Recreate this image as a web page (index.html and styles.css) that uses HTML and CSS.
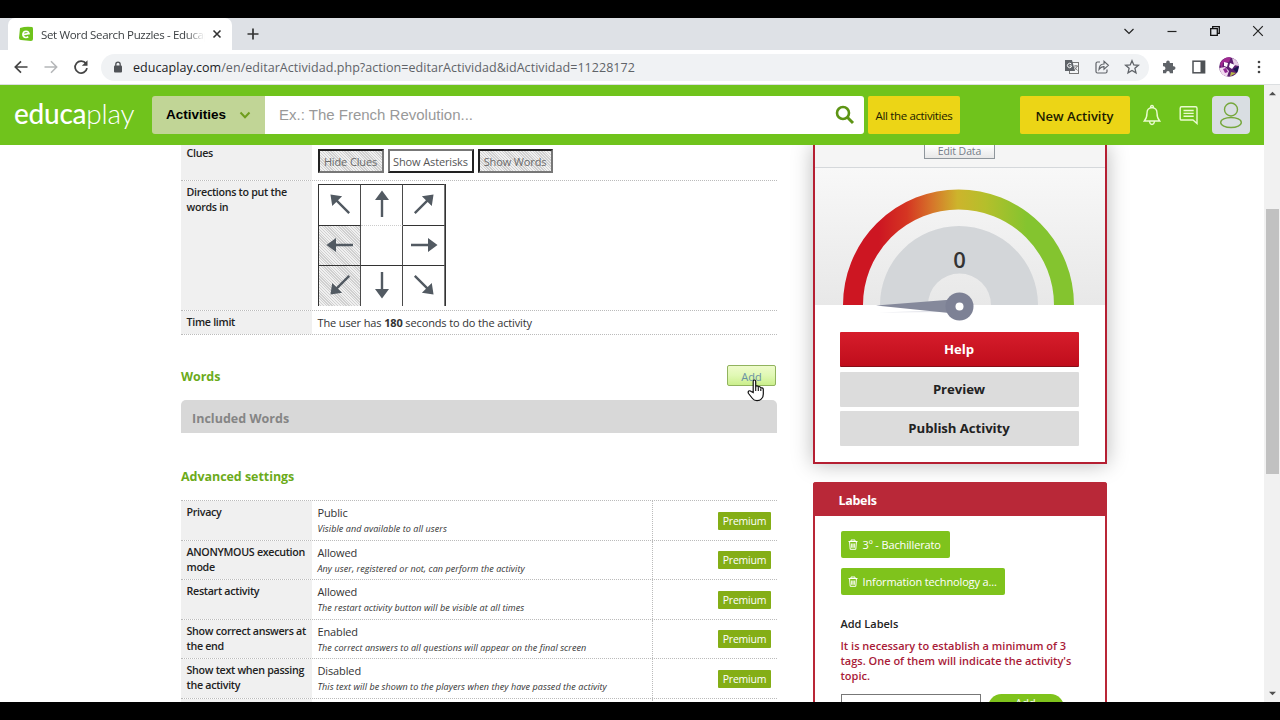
FILE: index.html
```html
<!DOCTYPE html>
<html lang="en">
  <head>
    <meta charset="UTF-8" />
    <meta name="viewport" content="width=device-width, initial-scale=1.0" />
    <title>Set Word Search Puzzles - Educaplay</title>
    <link rel="stylesheet" href="styles.css">
  </head>
  <body>
    <div class="browser">
      <div class="tabs">
        <div class="tab">
          <svg class="favicon" viewBox="0 0 16 16"><path d="M2 2 Q8 0 14 1 Q15 1 15 3 L15 13 Q15 15 13 15 L3 14 Q1 14 1 12 Z" fill="#6fc31c"/><path d="M5 8.6 L11 7.6 A3.1 3.1 0 1 0 10.2 10.6" fill="none" stroke="#fff" stroke-width="1.7"/></svg>
          <span class="tab-title">Set Word Search Puzzles - Educaplay</span>
          <svg class="tab-close" viewBox="0 0 10 10"><path d="M1.5 1.5 L8.5 8.5 M8.5 1.5 L1.5 8.5" stroke="#333" stroke-width="1.6"/></svg>
        </div>
        <svg class="new-tab" viewBox="0 0 12 12"><path d="M6 .5 V11.5 M.5 6 H11.5" stroke="#333" stroke-width="1.7"/></svg>
        <div class="window-buttons">
          <svg viewBox="0 0 12 12"><path d="M1.5 4 L6 8.5 L10.5 4" fill="none" stroke="#222" stroke-width="1.2"/></svg>
          <svg viewBox="0 0 12 12"><path d="M1.5 6.5 H10.5" stroke="#222" stroke-width="1.2"/></svg>
          <svg viewBox="0 0 12 12"><path d="M1.7 3.7 H8.3 V10.3 H1.7 Z M3.7 3.5 V1.7 H10.3 V8.3 H8.5" fill="none" stroke="#111" stroke-width="1.3"/></svg>
          <svg viewBox="0 0 12 12"><path d="M1.2 1.2 L10.8 10.8 M10.8 1.2 L1.2 10.8" stroke="#222" stroke-width="1.2"/></svg>
        </div>
      </div>
      <div class="toolbar">
        <svg class="nav" viewBox="0 0 16 16"><path d="M14.5 8 H2.5 M8 2.3 L2.3 8 L8 13.7" fill="none" stroke="#444" stroke-width="1.7"/></svg>
        <svg class="nav" viewBox="0 0 16 16"><path d="M1.5 8 H13.5 M8 2.3 L13.7 8 L8 13.7" fill="none" stroke="#b4b6b8" stroke-width="1.5"/></svg>
        <svg class="nav" viewBox="0 0 16 16"><path d="M13 4.6 A6 6 0 1 0 14 9.2" fill="none" stroke="#444" stroke-width="1.8"/><path d="M14.5 1.2 V6.8 H8.9 Z" fill="#444"/></svg>
        <div class="address">
          <svg class="lock" viewBox="0 0 10 12"><rect x="1" y="4.6" width="8" height="7" rx="1" fill="#505357"/><path d="M2.8 5 V3.4 A2.2 2.2 0 0 1 7.2 3.4 V5" fill="none" stroke="#505357" stroke-width="1.3"/></svg>
          <span class="url"><b>educaplay.com</b>/en/editarActividad.php?action=editarActividad&amp;idActividad=11228172</span>
          <svg class="tool first" viewBox="0 0 16 16"><rect x="5.5" y="3.5" width="9" height="11" fill="#f4f6f7" stroke="#777" /><path d="M1 1 H8 L11 12 H1 Z" fill="#5f6368"/><path d="M7.3 5 A2.2 2.2 0 1 0 7.3 8 V6.8 H5.5" fill="none" stroke="#fff"/><path d="M10 7 H14 M12 6 V7 M10.5 11 L13.5 7 M10.5 8.2 L13.5 11.5" stroke="#777" fill="none" stroke-width=".9"/></svg>
          <svg class="tool" viewBox="0 0 16 16"><path d="M6 3 H3.5 Q2 3 2 4.5 V12.5 Q2 14 3.5 14 H11.5 Q13 14 13 12.5 V10.5" fill="none" stroke="#5f6368" stroke-width="1.2"/><path d="M5 10.5 Q5.2 5 10 5 V2.3 L14.4 6.3 L10 10.2 V7.6 Q7 7.4 5 10.5 Z" fill="none" stroke="#5f6368" stroke-width="1.1"/></svg>
          <svg class="tool" viewBox="0 0 16 16"><path d="M8 1.7 L9.8 6 L14.4 6.3 L10.9 9.3 L12 13.9 L8 11.4 L4 13.9 L5.1 9.3 L1.6 6.3 L6.2 6 Z" fill="none" stroke="#5f6368" stroke-width="1.3"/></svg>
        </div>
        <div class="extras">
          <svg viewBox="0 0 16 16"><path d="M2 4 H5.2 V3.3 A1.8 1.8 0 0 1 8.8 3.3 V4 H12 V7.3 H12.7 A1.8 1.8 0 0 1 12.7 10.9 H12 V14.3 H8.8 V13.7 A1.8 1.8 0 0 0 5.2 13.7 V14.3 H2 V11 H2.6 A1.8 1.8 0 0 0 2.6 7.3 H2 Z" fill="#5f6368"/></svg>
          <svg viewBox="0 0 16 16"><rect x="2" y="2.2" width="11.6" height="11.6" fill="none" stroke="#4e5155" stroke-width="1.5"/><rect x="9.5" y="2" width="4.5" height="12" fill="#4e5155"/></svg>
          <svg class="avatar" viewBox="0 0 20 20"><circle cx="10" cy="10" r="9.8" fill="#5c1f70"/><path d="M1 7 A9.8 9.8 0 0 1 12 .4 L10 5 L4 6 L3 12 Z" fill="#a02a91"/><path d="M13 1 A9.8 9.8 0 0 1 19.8 9 L15 8 Z" fill="#e5cde5"/><path d="M.5 11 L6 10 L10 14 L8 19.6 A10 10 0 0 1 .5 11" fill="#f2daf0"/><path d="M5 5 L9 6 L8 10 L5 9 Z M11 6 L16 8 L13 12 L10 10 Z" fill="#fff"/><path d="M4 12 L7 11 L9 15 L6 16 Z" fill="#8e2b93"/><path d="M14 12 L20 9 L18 16 Z" fill="#16154e"/><path d="M12 15 L17 16 L11 19.5 Z" fill="#b6b849"/></svg>
          <svg viewBox="0 0 16 16"><circle cx="8" cy="3" r="1.3" fill="#444"/><circle cx="8" cy="8" r="1.3" fill="#444"/><circle cx="8" cy="13" r="1.3" fill="#444"/></svg>
        </div>
      </div>

      <div class="viewport">
        <div class="page">
          <div class="header">
            <div class="logo"><b>educa</b><span>play</span></div>
            <div class="category">Activities
              <svg viewBox="0 0 12 10"><path d="M1.5 2.5 L6 7.2 L10.5 2.5" fill="none" stroke="#6f9d1e" stroke-width="2"/></svg>
            </div>
            <div class="search">
              <span>Ex.: The French Revolution...</span>
              <svg viewBox="0 0 20 20"><circle cx="8" cy="8" r="6" fill="none" stroke="#5d9414" stroke-width="2.6"/><path d="M12.3 12.3 L18 18" stroke="#5d9414" stroke-width="3"/></svg>
            </div>
            <div class="all-activities">All the activities</div>
            <div class="new-activity">New Activity</div>
            <svg class="bell" viewBox="0 0 18 22"><path d="M1.3 17 Q4 14 4 9 Q4 4 9 3.6 Q14 4 14 9 Q14 14 16.7 17 Z M6.5 17.5 Q7 20.5 9 20.5 Q11 20.5 11.5 17.5 M7.6 3.5 Q7.6 1.5 9 1.5 Q10.4 1.5 10.4 3.5" fill="none" stroke="#eafbd0" stroke-width="1.4"/></svg>
            <svg class="chat" viewBox="0 0 20 20"><path d="M2.5 1.8 H16.5 Q18 1.8 18 3.3 V18.5 L14 15 H2.5 Q1.2 15 1.2 13.7 V3.3 Q1.2 1.8 2.5 1.8 Z M4.5 5.5 H14.7 M4.5 8.4 H14.7 M4.5 11.3 H14.7" fill="none" stroke="#eafbd0" stroke-width="1.4"/></svg>
            <div class="user">
              <svg viewBox="0 0 24 28"><circle cx="12" cy="8.5" r="6.5"/><ellipse cx="12" cy="21.5" rx="10.3" ry="5"/></svg>
            </div>
          </div>

          <div class="content">
            <div class="main">
              <div class="row clues">
                <div class="name">Clues</div>
                <div class="value toggles">
                  <span class="toggle pressed hide">Hide Clues</span>
                  <span class="toggle asterisks">Show Asterisks</span>
                  <span class="toggle pressed words">Show Words</span>
                </div>
              </div>
              <div class="row directions">
                <div class="name">Directions to put the<br>words in</div>
                <div class="value">
                  <div class="compass">
                    <div><svg class="nw" viewBox="0 0 30 30"><use href="#arrow"/></svg></div>
                    <div><svg class="n" viewBox="0 0 30 30"><use href="#arrow"/></svg></div>
                    <div><svg class="ne" viewBox="0 0 30 30"><use href="#arrow"/></svg></div>
                    <div class="off"><svg class="w" viewBox="0 0 30 30"><use href="#arrow"/></svg></div>
                    <div class="center"></div>
                    <div><svg class="e" viewBox="0 0 30 30"><use href="#arrow"/></svg></div>
                    <div class="off"><svg class="sw" viewBox="0 0 30 30"><use href="#arrow"/></svg></div>
                    <div><svg class="s" viewBox="0 0 30 30"><use href="#arrow"/></svg></div>
                    <div><svg class="se" viewBox="0 0 30 30"><use href="#arrow"/></svg></div>
                  </div>
                </div>
              </div>
              <div class="row time">
                <div class="name">Time limit</div>
                <div class="value">The user has <b>180</b> seconds to do the activity</div>
              </div>

              <div class="words-head">
                <h2>Words</h2>
                <div class="add">Add
                  <svg class="cursor" viewBox="0 0 18 23"><path d="M6.2 13.5 V2.5 Q6.2 1 7.4 1 Q8.7 1 8.7 2.5 V8 Q9 6.6 10.2 6.9 Q11.4 7 11.3 8.5 Q11.8 7.3 12.9 7.7 Q13.9 8 13.8 9.3 Q14.3 8.5 15.3 8.9 Q16.4 9.3 16.3 10.8 V15 Q16.3 18.5 14.3 20 Q13 21.7 10 21.7 Q7 21.7 5.5 19.5 L1.5 14.5 Q.7 13 1.8 12 Q3 11.3 4.2 12.5 Z" fill="#fff" stroke="#111" stroke-width="1.2"/><path d="M8.7 8 V12 M11.3 8.5 V12 M13.8 9.5 V12" stroke="#111" stroke-width="1.1"/></svg>
                </div>
              </div>
              <div class="included">Included Words</div>

              <h2 class="advanced">Advanced settings</h2>
              <div class="settings">
                <div class="row">
                  <div class="name">Privacy</div>
                  <div class="value">Public<i>Visible and available to all users</i></div>
                  <div class="action"><span class="premium">Premium</span></div>
                </div>
                <div class="row">
                  <div class="name">ANONYMOUS execution<br>mode</div>
                  <div class="value">Allowed<i>Any user, registered or not, can perform the activity</i></div>
                  <div class="action"><span class="premium">Premium</span></div>
                </div>
                <div class="row">
                  <div class="name">Restart activity</div>
                  <div class="value">Allowed<i>The restart activity button will be visible at all times</i></div>
                  <div class="action"><span class="premium">Premium</span></div>
                </div>
                <div class="row">
                  <div class="name">Show correct answers at<br>the end</div>
                  <div class="value">Enabled<i>The correct answers to all questions will appear on the final screen</i></div>
                  <div class="action"><span class="premium">Premium</span></div>
                </div>
                <div class="row">
                  <div class="name">Show text when passing<br>the activity</div>
                  <div class="value">Disabled<i>This text will be shown to the players when they have passed the activity</i></div>
                  <div class="action"><span class="premium">Premium</span></div>
                </div>
                <div class="row">
                  <div class="name"></div>
                  <div class="value"></div>
                  <div class="action"></div>
                </div>
              </div>
            </div>

            <div class="side">
              <div class="score">
                <div class="edit-row"><span class="edit-data">Edit Data</span></div>
                <div class="gauge">
                  <svg viewBox="0 0 289 154">
                    <defs>
                      <linearGradient id="dial" x1="27" x2="258" y1="0" y2="0" gradientUnits="userSpaceOnUse">
                        <stop offset=".16" stop-color="#cd1622"/>
                        <stop offset=".28" stop-color="#d53522"/>
                        <stop offset=".39" stop-color="#d6752a"/>
                        <stop offset=".5" stop-color="#cdb42c"/>
                        <stop offset=".62" stop-color="#b5bf2b"/>
                        <stop offset=".8" stop-color="#84c42f"/>
                      </linearGradient>
                    </defs>
                    <path d="M38 137 A105.500 105.500 0 0 1 249 137" fill="none" stroke="url(#dial)" stroke-width="20"/>
                    <path d="M65 137 A79 79 0 0 1 223 137 H176 A31.500 31.500 0 0 0 113 137 Z" fill="#d3d6d9"/>
                    <text x="144.500" y="100" class="gauge-value">0</text>
                    <path d="M64 144.500 L136 142 L136 144 Z" fill="#e5e6ec"/>
                    <path d="M61 137.500 L144 131 V146 Z" fill="#85899b"/>
                    <circle cx="144.500" cy="138.500" r="14" fill="#7d8195"/>
                    <circle cx="144.500" cy="138.500" r="4" fill="#fff"/>
                  </svg>
                </div>
                <div class="score-buttons">
                  <div class="help">Help</div>
                  <div>Preview</div>
                  <div>Publish Activity</div>
                </div>
              </div>

              <div class="labels">
                <h3>Labels</h3>
                <div class="labels-body">
                  <div class="tag bachillerato"><svg viewBox="0 0 10 11"><use href="#trash"/></svg><span>3º - Bachillerato</span></div>
                  <div class="tag technology"><svg viewBox="0 0 10 11"><use href="#trash"/></svg><span>Information technology a...</span></div>
                  <h4>Add Labels</h4>
                  <p>It is necessary to establish a minimum of 3<br>tags. One of them will indicate the activity's<br>topic.</p>
                  <div class="add-label">
                    <div class="input"></div>
                    <div class="button">Add</div>
                  </div>
                </div>
              </div>
            </div>
          </div>
        </div>
        <div class="scrollbar">
          <svg viewBox="0 0 8 5"><path d="M0 4.500 L4 .5 L8 4.500 Z" fill="#505050"/></svg>
          <div class="thumb"></div>
          <svg viewBox="0 0 8 5"><path d="M0 .5 L4 4.500 L8 .5 Z" fill="#505050"/></svg>
        </div>
      </div>
    </div>

    <svg class="symbols">
      <symbol id="arrow" viewBox="0 0 30 30"><path d="M13.800 28 V11 H8 L15 1.500 L22 11 H16.200 V28 Z" fill="#525a62"/></symbol>
      <symbol id="trash" viewBox="0 0 10 11"><path d="M.5 2.500 H9.500 M3 2.300 V1 H7 V2.300 M1.600 2.800 L2.200 10.300 H7.800 L8.400 2.800 M3.700 4.500 V8.800 M5 4.500 V8.800 M6.300 4.500 V8.800" fill="none" stroke="#fff" stroke-width="1"/></symbol>
    </svg>
  </body>
</html>
```

FILE: styles.css
```css
* {
  box-sizing: border-box;
}
body {
  margin: 0;
  height: 720px;
  padding: 18px 0;
  background: #000;
  overflow: hidden;
  font-family: "Open Sans", "Noto Sans", sans-serif;
  font-size: 11px;
  color: #222;
}
svg {
  display: block;
  flex: none;
}
.symbols {
  display: none;
}
h2, h3, h4, p {
  margin: 0;
}
.browser {
  height: 684px;
  display: flex;
  flex-direction: column;
  background: #fff;
  overflow: hidden;
}

/* browser window */
.tabs {
  height: 32px;
  flex: none;
  display: flex;
  align-items: center;
  background: #dee1e6;
  padding-left: 8px;
}
.tab {
  width: 224px;
  height: 32px;
  display: flex;
  align-items: center;
  background: #fff;
  border-radius: 7px 7px 0 0;
  padding-left: 10px;
}
.favicon {
  width: 16px;
  height: 16px;
}
.tab-title {
  width: 164px;
  margin-left: 7px;
  overflow: hidden;
  white-space: nowrap;
  font-size: 11.5px;
  letter-spacing: -0.34px;
  color: #3c4043;
  -webkit-mask-image: linear-gradient(to right, #000 88%, transparent);
  mask-image: linear-gradient(to right, #000 88%, transparent);
}
.tab-close {
  width: 10px;
  height: 10px;
  margin-left: 7px;
}
.new-tab {
  width: 12px;
  height: 12px;
  margin-left: 15px;
}
.window-buttons {
  margin-left: auto;
  display: flex;
  gap: 31px;
  padding: 0 16px 6px 0;
}
.window-buttons svg {
  width: 12px;
  height: 12px;
}
.toolbar {
  height: 35px;
  flex: none;
  display: flex;
  align-items: center;
  padding-left: 13px;
  border-bottom: 1px solid #dcdfe1;
}
.nav {
  width: 16px;
  height: 16px;
  margin-right: 14px;
}
.address {
  width: 1048px;
  height: 27px;
  margin-left: -2px;
  display: flex;
  align-items: center;
  padding-left: 12px;
  border-radius: 14px;
  background: #f0f2f4;
}
.lock {
  width: 10px;
  height: 12px;
}
.url {
  margin-left: 10px;
  font-size: 12.5px;
  letter-spacing: 0.045px;
  color: #5f6368;
}
.url b {
  font-weight: 400;
  color: #202124;
}
.tool {
  width: 16px;
  height: 16px;
  margin-right: 14px;
}
.tool.first {
  margin-left: auto;
}
.address .tool:last-child {
  margin-right: 9px;
}
.extras {
  flex: 1;
  display: flex;
  align-items: center;
  gap: 14px;
  padding-left: 12px;
}
.extras svg {
  width: 16px;
  height: 16px;
}
.extras .avatar {
  width: 20px;
  height: 20px;
  margin: 0 -2px;
}
.viewport {
  flex: 1;
  display: flex;
  min-height: 0;
}
.page {
  width: 1264px;
  overflow: hidden;
}
.scrollbar {
  width: 16px;
  background: #f1f1f1;
  display: flex;
  flex-direction: column;
  align-items: center;
  padding: 6px 0;
}
.scrollbar svg {
  width: 7px;
  height: 5px;
}
.thumb {
  width: 13px;
  height: 265px;
  margin: 113px 0 auto;
  background: #c1c1c1;
}

/* site header */
.header {
  position: relative;
  z-index: 2;
  height: 60px;
  display: flex;
  align-items: center;
  padding-left: 14px;
  background: #70c31c;
}
.logo {
  width: 138px;
  height: 42px;
  flex: none;
  line-height: 38px;
  font-family: Lato, sans-serif;
  font-size: 28px;
  letter-spacing: -0.25px;
  color: #fff;
}
.logo b {
  font-weight: 500;
}
.logo span {
  font-weight: 300;
}
.category {
  width: 113px;
  height: 38px;
  display: flex;
  align-items: center;
  padding: 0 0 1px 14px;
  background: #c1d596;
  border-radius: 3px 0 0 3px;
  font-family: "Liberation Sans", sans-serif;
  font-weight: bold;
  font-size: 13.5px;
  color: #000;
}
.category svg {
  width: 12px;
  height: 10px;
  margin-left: 13px;
}
.search {
  width: 599px;
  height: 38px;
  display: flex;
  align-items: center;
  justify-content: space-between;
  padding: 0 9px 0 14px;
  background: #fff;
  border-radius: 0 3px 3px 0;
  font-family: "Liberation Sans", sans-serif;
  font-size: 15px;
  color: #999;
}
.search span {
  padding-bottom: 2px;
}
.search svg {
  width: 20px;
  height: 20px;
}
.all-activities,
.new-activity {
  height: 38px;
  line-height: 39px;
  text-align: center;
  background: #ecd516;
  border-radius: 2px;
  color: #1c1c00;
}
.all-activities {
  width: 92px;
  margin-left: 4px;
  font-size: 11.5px;
  letter-spacing: -0.35px;
}
.new-activity {
  width: 110px;
  margin-left: 59.5px;
  line-height: 40px;
  font-size: 13px;
  font-weight: 600;
}
.bell {
  width: 18px;
  height: 22px;
  margin-left: 13.5px;
}
.chat {
  width: 20px;
  height: 20px;
  margin-left: 18px;
}
.user {
  width: 38px;
  height: 38px;
  margin-left: 12.5px;
  display: flex;
  align-items: center;
  justify-content: center;
  border-radius: 4px;
  background: #d9dee2;
}
.user svg {
  width: 24px;
  height: 28px;
  fill: none;
  stroke: #76a73c;
  stroke-width: 1.4;
}

/* activity form */
.content {
  display: flex;
  align-items: flex-start;
  padding-left: 181px;
}
.main {
  width: 596px;
}
.row {
  display: flex;
  border-bottom: 1px dotted #bbb;
}
.name {
  width: 131px;
  flex: none;
  padding: 4px 0 0 5.5px;
  background: #f0f0f0;
  font-size: 10.7px;
  font-weight: 600;
  line-height: 15px;
  letter-spacing: -0.3px;
  white-space: nowrap;
}
.value {
  flex: 1;
  padding: 4px 0 0 5.5px;
  line-height: 16px;
  letter-spacing: -0.13px;
  color: #333;
}
.row.clues {
  height: 36px;
}
.clues .name {
  padding-top: 1px;
}
.toggles {
  display: flex;
  gap: 4px;
}
.toggle {
  height: 24px;
  line-height: 21px;
  text-align: center;
  border: 2px outset #777;
  background: #fff;
  color: #555;
}
.toggle.pressed {
  border-style: inset;
  color: #6a6a6a;
}
.pressed,
.off {
  background: repeating-linear-gradient(45deg, #f0f0f0 0, #f0f0f0 1px, #d0d0d0 1px, #d0d0d0 2px);
}
.hide {
  width: 66px;
}
.asterisks {
  width: 86px;
}
.words {
  width: 75px;
}
.row.directions {
  height: 130px;
}
.compass {
  width: 128px;
  height: 122px;
  margin-top: -1px;
  display: grid;
  grid-template-columns: repeat(3, 42px);
  grid-template-rows: 41px 40px 41px;
  border-left: 1px solid #333;
  border-right: 1px solid #333;
}
.compass div {
  display: flex;
  align-items: center;
  justify-content: center;
  border-top: 1px solid #333;
  border-right: 1px solid #4a4a4a;
}
.compass div:nth-child(3n) {
  border-right: 1px solid #777;
}
.compass .center {
  border-top: 1px dotted #ccc;
}
.compass svg {
  width: 30px;
  height: 30px;
  margin: -2px 0 0 1px;
}
.ne { transform: rotate(45deg); }
.e { transform: rotate(90deg); }
.se { transform: rotate(135deg); }
.s { transform: rotate(180deg); }
.sw { transform: rotate(225deg); }
.w { transform: rotate(270deg); }
.nw { transform: rotate(315deg); }
.row.time {
  height: 24px;
}
h2 {
  font-size: 12.5px;
  line-height: 18px;
  font-weight: 700;
  letter-spacing: -0.05px;
  color: #6cab1a;
}
.words-head {
  height: 65px;
  display: flex;
  justify-content: space-between;
  padding: 30px 1px 0 0;
}
.words-head h2 {
  padding-top: 3px;
}
.add {
  position: relative;
  width: 49px;
  height: 21px;
  line-height: 21px;
  text-align: center;
  border: 1px solid #91b35e;
  background: linear-gradient(#eefbcb, #e0f8b4 50%, #cbef8c);
  border-radius: 2px;
  color: #6991a5;
}
.cursor {
  position: absolute;
  left: 19px;
  top: 13px;
  width: 18px;
  height: 23px;
}
.included {
  height: 33px;
  padding-left: 11px;
  line-height: 37px;
  background: #d8d8d8;
  border-radius: 5px 5px 0 0;
  font-size: 12.5px;
  font-weight: 700;
  letter-spacing: 0.02px;
  color: #858585;
}
.advanced {
  margin-top: 35px;
}
.settings {
  margin-top: 14px;
  border-top: 1px dotted #bbb;
}
.settings .row {
  height: 39.5px;
}
.settings i {
  display: block;
  font-size: 9px;
  line-height: 15px;
  letter-spacing: 0.07px;
  white-space: nowrap;
}
.action {
  width: 125px;
  display: flex;
  align-items: center;
  justify-content: flex-end;
  padding: 1px 6px 0 0;
  border-left: 1px dotted #bbb;
}
.premium {
  width: 53px;
  height: 18px;
  line-height: 18px;
  text-align: center;
  border-radius: 1px;
  background: #84ae16;
  color: #fff;
  font-size: 10.5px;
  letter-spacing: -0.2px;
}

/* right column */
.side {
  width: 294px;
  margin-left: 35.5px;
}
.score {
  height: 319px;
  border: 2px solid #b51f32;
  border-top: 0;
  box-shadow: 0 0 20px rgba(0, 0, 0, 0.28);
  background: #fff;
}
.edit-row {
  height: 23px;
  display: flex;
  justify-content: center;
  background: #f5f5f5;
  border-bottom: 1px solid #d5d8db;
}
.edit-data {
  width: 71px;
  height: 14px;
  line-height: 12px;
  text-align: center;
  border: 1px solid #8f969c;
  border-top: 0;
  background: linear-gradient(#fff, #e8e8e8);
  color: #747c88;
  font-size: 10.5px;
  letter-spacing: -0.1px;
}
.gauge {
  height: 137px;
  background: linear-gradient(#f8f8f8, #e8e8e8);
}
.gauge svg {
  width: 289px;
  height: 154px;
}
.gauge-value {
  font-size: 22px;
  font-weight: 600;
  text-anchor: middle;
  fill: #333;
}
.score-buttons {
  display: flex;
  flex-direction: column;
  gap: 4.5px;
  padding: 27px 26px 0 25px;
  font-size: 13.2px;
  font-weight: 700;
  letter-spacing: -0.07px;
  text-align: center;
}
.score-buttons div {
  height: 35px;
  line-height: 34px;
  background: #dcdcdc;
  border-radius: 1px;
}
.score-buttons .help {
  line-height: 35px;
  background: linear-gradient(#d61d2b, #c00d1c);
  border-bottom: 1px solid #870d17;
  color: #fff;
}
.labels {
  margin-top: 18px;
  height: 300px;
  border: 2px solid #b92636;
  border-radius: 3px 3px 0 0;
  border-top: 0;
}
.labels h3 {
  height: 34px;
  margin: 0 -2px;
  padding-left: 26px;
  line-height: 37px;
  border-radius: 3px 3px 0 0;
  background: #b92838;
  font-size: 12.5px;
  font-weight: 700;
  letter-spacing: -0.3px;
  color: #fff;
}
.labels-body {
  padding: 15px 0 0 26px;
}
.tag {
  height: 27px;
  display: flex;
  align-items: center;
  gap: 5px;
  padding-left: 7px;
  margin-bottom: 10px;
  border-radius: 2px;
  background: #7fc31c;
  color: #fff;
  white-space: nowrap;
  letter-spacing: -0.13px;
}
.tag svg {
  width: 10px;
  height: 11px;
}
.bachillerato {
  width: 109px;
}
.technology {
  width: 164px;
}
.labels h4 {
  margin-top: 21px;
  font-size: 11px;
  font-weight: 600;
  line-height: 15px;
}
.labels p {
  margin-top: 7px;
  font-size: 11px;
  font-weight: 600;
  line-height: 15px;
  color: #a91b38;
  white-space: nowrap;
}
.add-label {
  display: flex;
  gap: 7px;
  margin-top: 11px;
}
.input {
  width: 140px;
  height: 27px;
  border: 1px solid #777;
}
.button {
  width: 76px;
  height: 27px;
  line-height: 18px;
  text-align: center;
  border-radius: 14px;
  background: #7fc31c;
  color: #fff;
}
```
